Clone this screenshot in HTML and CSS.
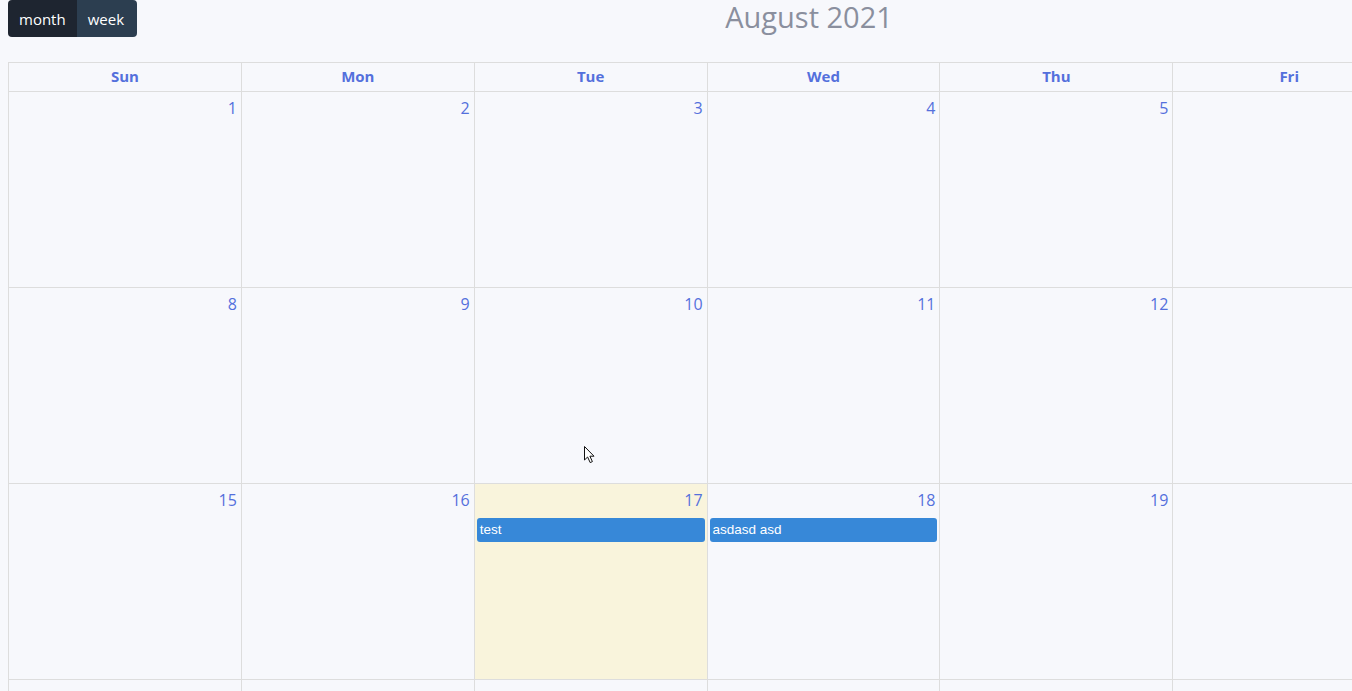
FILE: index.html
```html
<!DOCTYPE html>
<html>
<head>
  <title>Calendar</title>
  <link rel="stylesheet" href="styles.css">
</head>
<body>
  <div class="calendar">
    <div class="toolbar">
      <div class="btn-group">
        <button class="btn active">month</button>
        <button class="btn">week</button>
      </div>
      <h2 class="title">August 2021</h2>
      <div class="spacer"></div>
    </div>

    <div class="grid">
      <div class="row head">
        <div class="cell">Sun</div>
        <div class="cell">Mon</div>
        <div class="cell">Tue</div>
        <div class="cell">Wed</div>
        <div class="cell">Thu</div>
        <div class="cell">Fri</div>
        <div class="cell"></div>
      </div>

      <div class="row week">
        <div class="cell"><span class="num">1</span></div>
        <div class="cell"><span class="num">2</span></div>
        <div class="cell"><span class="num">3</span></div>
        <div class="cell"><span class="num">4</span></div>
        <div class="cell"><span class="num">5</span></div>
        <div class="cell"></div>
        <div class="cell"></div>
      </div>

      <div class="row week">
        <div class="cell"><span class="num">8</span></div>
        <div class="cell"><span class="num">9</span></div>
        <div class="cell"><span class="num">10</span></div>
        <div class="cell"><span class="num">11</span></div>
        <div class="cell"><span class="num">12</span></div>
        <div class="cell"></div>
        <div class="cell"></div>
      </div>

      <div class="row week">
        <div class="cell"><span class="num">15</span></div>
        <div class="cell"><span class="num">16</span></div>
        <div class="cell today">
          <span class="num">17</span>
          <div class="event">test</div>
        </div>
        <div class="cell">
          <span class="num">18</span>
          <div class="event">asdasd asd</div>
        </div>
        <div class="cell"><span class="num">19</span></div>
        <div class="cell"></div>
        <div class="cell"></div>
      </div>

      <div class="row week last">
        <div class="cell"></div>
        <div class="cell"></div>
        <div class="cell"></div>
        <div class="cell"></div>
        <div class="cell"></div>
        <div class="cell"></div>
        <div class="cell"></div>
      </div>
    </div>
  </div>

  <!-- mouse pointer -->
  <svg class="pointer" width="14" height="20" viewBox="0 0 14 20">
    <path d="M1.5 1.5 L1.5 15 L4.6 12 L7.2 17.6 L9.4 16.6 L6.9 11.2 L11 11.2 Z" fill="#fff" stroke="#111" stroke-width="1" stroke-linejoin="round"/>
  </svg>
</body>
</html>
```

FILE: styles.css
```css
* {
  box-sizing: border-box;
}

html {
  overflow: hidden;
}

body {
  margin: 0;
  padding: 0 8px;
  background: #f7f8fc;
  font-family: "Open Sans", "Noto Sans", sans-serif;
}

.calendar {
  width: 1631px;
}

.toolbar {
  display: flex;
  justify-content: space-between;
  align-items: flex-start;
  height: 62px;
}

.btn-group {
  display: flex;
}

.btn {
  border: none;
  margin: 0;
  height: 37px;
  padding: 0 11px;
  font-family: inherit;
  font-size: 15px;
  color: #fff;
  background: #2c3e50;
  cursor: pointer;
}

.btn:first-child {
  border-radius: 4px 0 0 4px;
}

.btn:last-child {
  padding-right: 13px;
  border-radius: 0 4px 4px 0;
}

.btn.active {
  background: #1e2530;
}

.spacer {
  width: 158px;
}

.title {
  margin: 0;
  font-size: 29px;
  font-weight: 400;
  line-height: 34px;
  color: #8a8f9e;
}

.grid {
  border-left: 1px solid #dddddd;
  border-top: 1px solid #dddddd;
}

.row {
  display: grid;
  grid-template-columns: repeat(7, 1fr);
}

.cell {
  border-right: 1px solid #dddddd;
  border-bottom: 1px solid #dddddd;
}

.head .cell {
  height: 29px;
  text-align: center;
  font-size: 15px;
  font-weight: 700;
  line-height: 27px;
  color: #5470dc;
}

.week .cell {
  height: 196px;
  display: flex;
  flex-direction: column;
  align-items: stretch;
}

.num {
  padding: 5px 4px 0 0;
  text-align: right;
  font-size: 16px;
  line-height: 22px;
  color: #5470dc;
}

.today {
  background: #f9f4dc;
}

.event {
  margin: 7px 2px 0 2px;
  height: 24px;
  padding: 0 3px;
  border-radius: 3px;
  background: #3788d8;
  color: #fff;
  font-family: "Liberation Sans", Arial, sans-serif;
  font-size: 13.5px;
  line-height: 23px;
}

.pointer {
  position: absolute;
  left: 583px;
  top: 445px;
}
```
